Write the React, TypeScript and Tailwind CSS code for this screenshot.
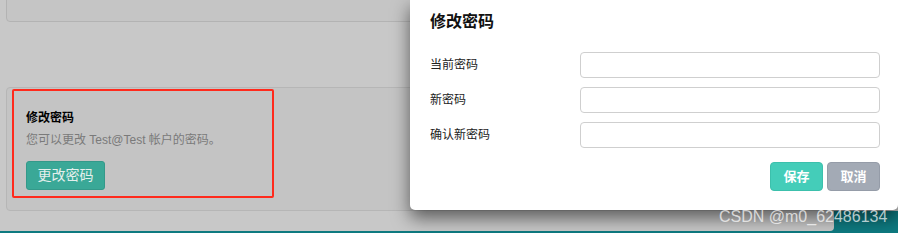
import React from "react";

const font = { fontFamily: '"Liberation Sans", Roboto, "Noto Sans CJK SC", sans-serif' };

export default function App() {
  return (
    <div className="relative w-[898px] h-[233px] overflow-hidden bg-[#c8c8c8]" style={font}>
      {/* background page */}
      <div className="flex flex-col h-full">
        <div className="px-[6px]">
          <div className="-mt-[20px] h-[42px] w-[880px] rounded-[4px] border border-[#b3b3b3] bg-[#c5c5c5]" />
        </div>
        <div className="mt-[65px] px-[6px]">
          <div className="h-[124px] w-[880px] rounded-[4px] border border-[#b6b6b6] bg-[#c4c4c4] pl-[5px] pt-[1px]">
            <div className="w-[262px] h-[109px] rounded-[2px] border-2 border-[#ff2a1c] pl-[12px] pt-[19px]">
              <div className="text-[12px] font-bold text-black leading-[16px]">修改密码</div>
              <div className="mt-[6px] text-[12px] text-[#7a7a7a] leading-[16px]">您可以更改 Test@Test 帐户的密码。</div>
              <div className="mt-[13px] flex h-[29px] w-[79px] items-center justify-center rounded-[3px] border border-[#34998a] bg-[#3aa897] text-[14px] text-[#e4efec]">
                更改密码
              </div>
            </div>
          </div>
        </div>
        <div className="flex flex-1 items-stretch bg-[#0e7a80]">
          <div className="w-[834px] h-[20px] rounded-br-[4px] bg-[#c8c8c8]" />
        </div>
      </div>

      {/* modal */}
      <div className="absolute left-[410px] top-0 w-[488px] h-[210px] rounded-b-[5px] bg-white shadow-[0_8px_18px_rgba(0,0,0,0.55)]">
        <div className="flex flex-col pl-[20px] pr-[18px]">
          <div className="pt-[12px] text-[16px] font-bold text-[#111] leading-[20px]">修改密码</div>
          <div className="mt-[20px] flex flex-col gap-[9px]">
            {["当前密码", "新密码", "确认新密码"].map((l) => (
              <div key={l} className="flex items-center">
                <div className="w-[150px] text-[12px] text-[#222]">{l}</div>
                <div className="h-[26px] flex-1 rounded-[4px] border border-[#cfcfcf] bg-white" />
              </div>
            ))}
          </div>
          <div className="mt-[14px] flex justify-end gap-[4px]">
            <div className="flex h-[29px] w-[53px] items-center justify-center rounded-[4px] border border-[#3cc0ac] bg-[#44cdb9] text-[13px] font-bold text-white">
              保存
            </div>
            <div className="flex h-[29px] w-[53px] items-center justify-center rounded-[4px] border border-[#959ca8] bg-[#a3aab5] text-[13px] font-bold text-white">
              取消
            </div>
          </div>
        </div>
      </div>

      {/* watermark */}
      <div className="absolute left-[719px] top-[206px] text-[16px] leading-[22px] text-white/70 whitespace-nowrap">
        CSDN @m0_62486134
      </div>
    </div>
  );
}
